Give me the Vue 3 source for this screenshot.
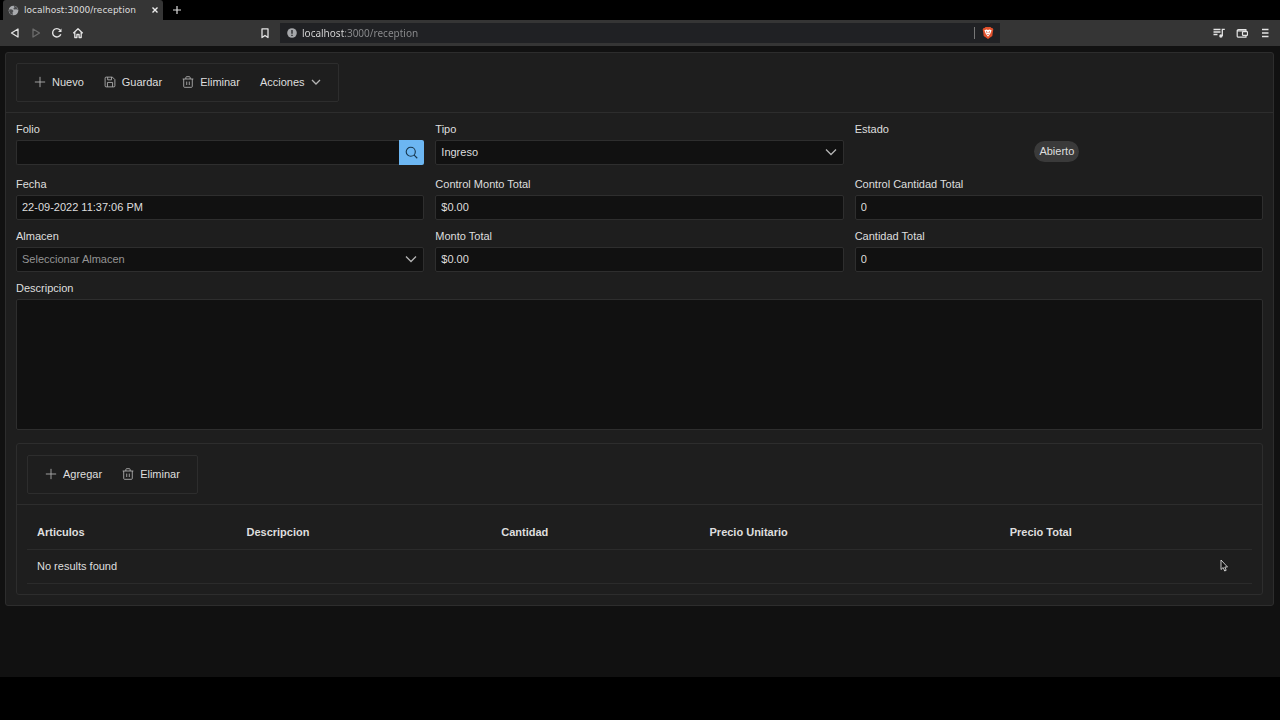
<script setup>
import { ref } from 'vue'

const url = ref('localhost:3000/reception')
const folio = ref('')
const tipo = ref('Ingreso')
const fecha = ref('22-09-2022 11:37:06 PM')
const almacen = ref('')
const descripcion = ref('')
const controlMonto = ref('$0.00')
const controlCantidad = ref('0')
const montoTotal = ref('$0.00')
const cantidadTotal = ref('0')
const columns = [
  { name: 'Articulos', cls: 'w-art' },
  { name: 'Descripcion', cls: 'w-desc' },
  { name: 'Cantidad', cls: 'w-cant' },
  { name: 'Precio Unitario', cls: 'w-unit' },
  { name: 'Precio Total', cls: 'w-total' }
]
</script>

<template>
  <div class="window">
    <header class="tabs">
      <div class="tab">
        <svg class="globe" viewBox="0 0 12 12"><circle cx="6" cy="6" r="5.300" fill="#a9abae" /><path d="M1.500 4.500 4.500 5l1.500 1.500L5 8l.3 2.800A5 5 0 0 1 1.200 7zM6.300 1.200 7 3l-1.300 1 1 1L9 4.600l1.800.9A5 5 0 0 0 6.300 1.200z" fill="#4a4b4d" /></svg>
        <span class="tab-title">localhost:3000/reception</span>
        <button class="tab-close" aria-label="Cerrar"><svg viewBox="0 0 8 8"><path d="M1.500 1.500l5 5M6.500 1.500l-5 5" stroke="#eee" stroke-width="1.400" /></svg></button>
      </div>
      <button class="tab-new" aria-label="Nueva pestaña"><svg viewBox="0 0 10 10"><path d="M5 1v8M1 5h8" stroke="#ddd" stroke-width="1.200" /></svg></button>
    </header>

    <nav class="browser">
      <div class="nav-left">
        <button aria-label="Atrás"><svg viewBox="0 0 12 12"><path d="M9 2v8L2.500 6z" fill="none" stroke="#e4e4e4" stroke-width="1.300" stroke-linejoin="round" /></svg></button>
        <button aria-label="Adelante"><svg viewBox="0 0 12 12"><path d="M3 2v8L9.500 6z" fill="none" stroke="#6c6c6c" stroke-width="1.300" stroke-linejoin="round" /></svg></button>
        <button aria-label="Recargar"><svg viewBox="0 0 12 12"><path d="M9.800 7.200A4.200 4.200 0 1 1 9 3" fill="none" stroke="#e4e4e4" stroke-width="1.400" /><path d="M10.500 1.500v3.500H7z" fill="#e4e4e4" /></svg></button>
        <button aria-label="Inicio"><svg viewBox="0 0 12 12"><path d="M1.300 6.200 6 1.800l4.700 4.400M2.800 5.200v5.300h2.100V7.500h2.200v3h2.100V5.200" fill="none" stroke="#e4e4e4" stroke-width="1.300" stroke-linejoin="round" /></svg></button>
        <button class="bookmark" aria-label="Marcador"><svg viewBox="0 0 12 12"><path d="M3 1.800h6v8.800L6 8.400l-3 2.200z" fill="none" stroke="#e4e4e4" stroke-width="1.300" stroke-linejoin="round" /></svg></button>
      </div>
      <div class="address">
        <svg class="info" viewBox="0 0 12 12"><circle cx="6" cy="6" r="4.800" fill="#a5a7aa" /><path d="M6 3v3.800M6 7.800v1.300" stroke="#202124" stroke-width="1.300" /></svg>
        <input v-model="url" class="url" type="text" aria-label="Dirección" />
        <i class="sep"></i>
        <button aria-label="Brave Shields"><svg class="brave" viewBox="0 0 12 14"><path d="M3.500 1h5l1 1.100 1-.1.900 1.800-.400 1L10.300 10 6 13 1.700 10 1 4.800l-.400-1L1.500 2l1 .1z" fill="#e2512c" /><path d="M2.400 4.200 4.500 3.500 6 4l1.500-.5 2.100.7-1.200 3.300L6 10.800 3.600 7.500z" fill="#fff" /><path d="M4.200 5.200 5.200 6l-.7 1.200M7.800 5.200 6.800 6l.7 1.200M5.200 8.500h1.600" fill="none" stroke="#e2512c" stroke-width=".8" /></svg></button>
      </div>
      <div class="nav-right">
        <button aria-label="Medios"><svg viewBox="0 0 12 12"><path d="M.5 2.500h7M.5 5h7M.5 7.500h4M9.300 9V2.300h2.500" fill="none" stroke="#e4e4e4" stroke-width="1.300" /><circle cx="7.900" cy="9" r="1.700" fill="#e4e4e4" /></svg></button>
        <button aria-label="Cartera"><svg viewBox="0 0 12 12"><path d="M10 4.500V2.500H2.500a1.300 1.300 0 0 0-1.300 1.300V9A1.200 1.200 0 0 0 2.400 10.200H10V8.500M1.200 3.800h8.300" fill="none" stroke="#e4e4e4" stroke-width="1.200" stroke-linejoin="round" /><rect x="6.500" y="4.700" width="5" height="3.600" rx=".6" fill="none" stroke="#e4e4e4" stroke-width="1.200" /></svg></button>
        <button aria-label="Menú"><svg viewBox="0 0 12 12"><path d="M3 2.500h6.500M3 6h6.500M3 9.500h6.500" stroke="#e4e4e4" stroke-width="1.300" /></svg></button>
      </div>
    </nav>

    <main class="page">
      <section class="card">
        <div class="card-head">
          <div class="group">
            <button class="action"><svg viewBox="0 0 14 14"><path d="M7 1v12M1 7h12" /></svg>Nuevo</button>
            <button class="action"><svg viewBox="0 0 14 14"><path d="M2.500 1.300h7.300l2.900 2.900v7.300a1.200 1.200 0 0 1-1.200 1.200h-9a1.200 1.200 0 0 1-1.200-1.200v-9a1.200 1.200 0 0 1 1.200-1.200zM4 12.700V7.500h6v5.200M4.300 1.300v3.200h4.500V1.300" /></svg>Guardar</button>
            <button class="action"><svg viewBox="0 0 14 14"><path d="M.8 3.500h12.400M4.500 3.500V1.800a1 1 0 0 1 1-1h3a1 1 0 0 1 1 1v1.700M2 3.500v8.700a1 1 0 0 0 1 1h8a1 1 0 0 0 1-1V3.500M5.500 6.500v4M8.500 6.500v4" /></svg>Eliminar</button>
            <button class="action">Acciones<svg class="down" viewBox="0 0 10 10"><path d="M1 3l4 4 4-4" /></svg></button>
          </div>
        </div>

        <form class="form" @submit.prevent>
          <div class="row first">
            <div class="field">
              <label for="folio">Folio</label>
              <div class="search">
                <input id="folio" v-model="folio" class="box" type="text" />
                <button aria-label="Buscar"><svg viewBox="0 0 14 14"><circle cx="6.200" cy="6.200" r="4.900" /><path d="M9.600 9.600l3.600 3.600" /></svg></button>
              </div>
            </div>
            <div class="field">
              <label for="tipo">Tipo</label>
              <div class="pick">
                <select id="tipo" v-model="tipo" class="box"><option>Ingreso</option></select>
                <svg viewBox="0 0 12 12"><path d="M1 3.500l5 5 5-5" /></svg>
              </div>
            </div>
            <div class="field">
              <span class="label">Estado</span>
              <div class="status"><span class="badge">Abierto</span></div>
            </div>
          </div>
          <div class="row">
            <div class="field"><label for="fecha">Fecha</label><input id="fecha" v-model="fecha" class="box" type="text" /></div>
            <div class="field"><label for="cmonto">Control Monto Total</label><input id="cmonto" v-model="controlMonto" class="box" type="text" /></div>
            <div class="field"><label for="ccant">Control Cantidad Total</label><input id="ccant" v-model="controlCantidad" class="box" type="text" /></div>
          </div>
          <div class="row">
            <div class="field">
              <label for="almacen">Almacen</label>
              <div class="pick">
                <select id="almacen" v-model="almacen" class="box empty"><option value="">Seleccionar Almacen</option></select>
                <svg viewBox="0 0 12 12"><path d="M1 3.500l5 5 5-5" /></svg>
              </div>
            </div>
            <div class="field"><label for="monto">Monto Total</label><input id="monto" v-model="montoTotal" class="box" type="text" /></div>
            <div class="field"><label for="cant">Cantidad Total</label><input id="cant" v-model="cantidadTotal" class="box" type="text" /></div>
          </div>
          <div class="field">
            <label for="desc">Descripcion</label>
            <textarea id="desc" v-model="descripcion" class="box area"></textarea>
          </div>
        </form>

        <section class="card lines">
          <div class="card-head">
            <div class="group">
              <button class="action"><svg viewBox="0 0 14 14"><path d="M7 1v12M1 7h12" /></svg>Agregar</button>
              <button class="action"><svg viewBox="0 0 14 14"><path d="M.8 3.500h12.400M4.500 3.500V1.800a1 1 0 0 1 1-1h3a1 1 0 0 1 1 1v1.700M2 3.500v8.700a1 1 0 0 0 1 1h8a1 1 0 0 0 1-1V3.500M5.500 6.500v4M8.500 6.500v4" /></svg>Eliminar</button>
            </div>
          </div>
          <div class="table-wrap">
            <table>
              <thead>
                <tr><th v-for="c in columns" :key="c.name" :class="c.cls" scope="col">{{ c.name }}</th></tr>
              </thead>
              <tbody>
                <tr><td colspan="5">No results found</td></tr>
              </tbody>
            </table>
            <svg class="pointer" viewBox="0 0 8 13"><path d="M1 1v9.500l2.200-2L4.700 12l1.500-.7L4.800 8h2.700z" fill="#111" stroke="#ddd" stroke-width=".9" /></svg>
          </div>
        </section>
      </section>
    </main>
  </div>
</template>

<style>
body { background: #000; }
</style>

<style scoped>
* { box-sizing: border-box; }
.window {
  min-height: 100vh;
  display: flex;
  flex-direction: column;
  padding-bottom: 43px;
  background: #000;
  color: #dedede;
  font-family: "Liberation Sans", Arial, sans-serif;
  font-size: 11px;
  line-height: 14px;
}
button { font: inherit; color: inherit; background: none; border: 0; padding: 0; margin: 0; display: flex; align-items: center; }
svg { display: block; flex: none; }

.tabs { display: flex; align-items: center; height: 20px; padding-left: 3px; gap: 9px; font-family: "DejaVu Sans", sans-serif; font-size: 9px; }
.tab { display: flex; align-items: center; width: 160px; height: 20px; padding: 0 4px 0 5px; background: #353535; border-radius: 3px 3px 0 0; }
.globe { width: 11px; height: 11px; margin-right: 5px; }
.tab-title { flex: 1; white-space: nowrap; }
.tab-close svg { width: 8px; height: 8px; }
.tab-new svg { width: 10px; height: 10px; }

.browser { display: grid; grid-template-columns: 1fr minmax(0, 720px) 1fr; align-items: center; height: 26px; background: #353535; }
.nav-left { display: flex; align-items: center; gap: 9px; padding: 0 9px; }
.nav-left svg, .nav-right svg { width: 12px; height: 12px; }
.bookmark { margin-left: auto; }
.nav-right { display: flex; justify-content: flex-end; gap: 11px; padding-right: 9px; }
.address { display: flex; align-items: center; height: 20px; padding: 0 6px; background: #202124; }
.info { width: 12px; height: 12px; }
.url {
  flex: 1;
  min-width: 0;
  margin-left: 4px;
  padding: 0;
  border: 0;
  outline: 0;
  font: 10px/14px "Noto Sans", sans-serif;
  color: transparent;
  background: linear-gradient(90deg, #dcdcdc 43px, #8c8d8f 43px);
  -webkit-background-clip: text;
  background-clip: text;
}
.sep { width: 1px; height: 12px; margin-right: 7px; background: #777; }
.brave { width: 12px; height: 14px; }

.page { flex: 1; padding: 6px 6px 5px 5px; background: #111; }
.card { background: #1e1e1e; border: 1px solid #2d2d2d; border-radius: 3px; }
.page > .card { padding-bottom: 10px; }
.card-head { display: flex; padding: 10px; border-bottom: 1px solid #2d2d2d; }
.group { display: flex; align-items: center; height: 39px; padding: 0 7px; border: 1px solid #2d2d2d; border-radius: 2px; }
.action { gap: 6px; height: 24px; padding: 0 10px 1px; }
.action svg { width: 12px; height: 12px; fill: none; stroke: #b4b4b4; stroke-width: 1; }
.action .down { width: 10px; height: 10px; stroke-width: 1.300; }

.form { display: flex; flex-direction: column; gap: 9px; padding: 9px 10px 13px; }
.row { display: grid; grid-template-columns: repeat(3, minmax(0, 1fr)); gap: 11px; }
.first { margin-bottom: 3px; }
.field { display: flex; flex-direction: column; gap: 4px; }
.box {
  display: block;
  width: 100%;
  height: 25px;
  margin: 0;
  padding: 0 5px 1px;
  font: inherit;
  color: #dedede;
  background: #111;
  border: 1px solid #2e2e2e;
  border-radius: 2px;
  appearance: none;
  outline: 0;
}
.empty { color: #949494; }
.area { height: 131px; resize: none; }
.pick { position: relative; }
.pick svg { position: absolute; right: 7px; top: 6px; width: 12px; height: 12px; fill: none; stroke: #b4b4b4; stroke-width: 1.300; pointer-events: none; }
.search { display: flex; }
.search .box { border-radius: 2px 0 0 2px; border-right: 0; }
.search button { width: 25px; flex: none; justify-content: center; background: #6cb6f2; border-radius: 0 2px 2px 0; }
.search svg { width: 13px; height: 13px; fill: none; stroke: #17364d; stroke-width: 1.200; }
.status { display: flex; justify-content: center; padding: 1px 4px 0 0; }
.badge { padding: 3px 5px; line-height: 15px; background: #3a3a3a; border-radius: 11px; }

.lines { margin: 0 10px; }
.lines .card-head { padding-top: 11px; }
.table-wrap { position: relative; padding: 10px; }
table { width: 100%; border-collapse: collapse; table-layout: fixed; }
th, td { height: 34px; padding: 0 10px; text-align: left; border-bottom: 1px solid #2b2b2b; }
.w-art { width: 17.1%; }
.w-desc { width: 20.8%; }
.w-cant { width: 17%; }
.w-unit { width: 24.5%; }
.pointer { position: absolute; right: 34px; bottom: 22px; width: 8px; height: 13px; }
</style>
